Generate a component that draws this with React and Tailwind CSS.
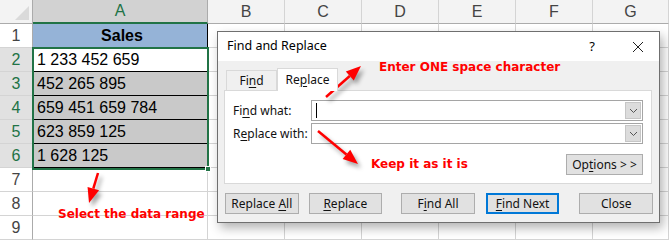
import React from 'react';

const cols = [
  { key: 'A', w: 'w-[175px]' },
  { key: 'B', w: 'w-[77px]' },
  { key: 'C', w: 'w-[77px]' },
  { key: 'D', w: 'w-[77px]' },
  { key: 'E', w: 'w-[77px]' },
  { key: 'F', w: 'w-[77px]' },
  { key: 'G', w: 'w-[76px]' },
];

const values = ['Sales', '1 233 452 659', '452 265 895', '659 451 659 784', '623 859 125', '1 628 125', '', '', ''];

const cellFont = { fontFamily: '"Liberation Sans", Arial, sans-serif' };
const uiFont = { fontFamily: '"Noto Sans", "Liberation Sans", sans-serif' };
const noteFont = { fontFamily: '"DejaVu Sans", Verdana, sans-serif' };

function U({ children }) {
  return <span className="underline underline-offset-2">{children}</span>;
}

function Btn({ children, className = '', focused = false }) {
  const border = focused ? 'border-2 border-[#0078d7]' : 'border border-[#adadad]';
  return (
    <div className={`h-[21px] w-[74px] flex items-center justify-center bg-[#e1e1e1] text-[12px] text-[#111] ${border} ${className}`}>
      <span>{children}</span>
    </div>
  );
}

function ComboInput({ cursor }) {
  return (
    <div className="h-[21px] w-[332px] flex items-stretch bg-white border border-[#a5a5a5]">
      <div className="flex-1 flex items-center pl-[4px]">
        {cursor && <div className="w-[1px] h-[15px] bg-black" />}
      </div>
      <div className="w-[16px] m-[1px] bg-[#dcdcdc] border border-[#c6c6c6] flex items-center justify-center">
        <svg width="9" height="6" viewBox="0 0 9 6"><path d="M1 1 L4.5 4.5 L8 1" stroke="#555" strokeWidth="1" fill="none" /></svg>
      </div>
    </div>
  );
}

function Sheet() {
  return (
    <div className="flex flex-col" style={cellFont}>
      {/* column headers */}
      <div className="flex h-[24px]">
        <div className="w-[33px] bg-[#f3f3f3] border-r border-b border-[#ababab] relative">
          <div className="absolute right-[3px] bottom-[3px] w-0 h-0 border-l-[14px] border-l-transparent border-b-[14px] border-b-[#dadada]" />
        </div>
        {cols.map((c) =>
          c.key === 'A' ? (
            <div key={c.key} className={`${c.w} bg-[#d2d2d2] border-r border-[#ababab] border-b-2 border-b-[#217346] flex items-center justify-center text-[16px] text-[#217346]`}>
              {c.key}
            </div>
          ) : (
            <div key={c.key} className={`${c.w} bg-[#f3f3f3] border-r border-b border-[#d4d4d4] border-b-[#ababab] flex items-center justify-center text-[16px] text-[#444]`}>
              {c.key}
            </div>
          )
        )}
      </div>
      {values.map((v, i) => {
        const row = i + 1;
        const sel = row >= 2 && row <= 6;
        let aCls = 'bg-white border-b border-[#d4d4d4]';
        if (row === 1) aCls = 'bg-[#95b3d7] border-b border-black font-bold justify-center';
        else if (row === 2) aCls = 'bg-white border-b border-black';
        else if (sel) aCls = 'bg-[#c9c9c9] border-b border-black';
        return (
          <div key={row} className="flex h-[24px]">
            <div className={`w-[33px] border-r border-b border-[#d4d4d4] border-r-[#ababab] flex items-center justify-center text-[16px] ${sel ? 'bg-[#e1e1e1] text-[#217346]' : 'bg-white text-[#444]'}`}>
              {row}
            </div>
            <div className={`w-[175px] border-r border-[#d4d4d4] flex items-center pl-[4px] text-[16px] text-black ${aCls}`}>
              {v}
            </div>
            {cols.slice(1).map((c) => (
              <div key={c.key} className={`${c.w} bg-white border-r border-b border-[#d4d4d4]`} />
            ))}
          </div>
        );
      })}
    </div>
  );
}

function Dialog() {
  return (
    <div className="absolute left-[217px] top-[31px] w-[443px] h-[192px] flex flex-col bg-[#f0f0f0] border border-[#6f6f6f] shadow-[3px_5px_10px_rgba(0,0,0,0.3)]" style={uiFont}>
      <div className="h-[29px] bg-white flex items-center pl-[9px] pr-[15px] text-[12.5px] text-black">
        <span className="flex-1">Find and Replace</span>
        <span className="mr-[37px] text-[13px]">?</span>
        <svg width="12" height="12" viewBox="0 0 12 12"><path d="M1 1 L11 11 M11 1 L1 11" stroke="#222" strokeWidth="1" /></svg>
      </div>
      <div className="flex flex-col px-[6px]">
        <div className="flex items-end h-[29px] pl-[2px] text-[12px] text-[#111]">
          <div className="w-[51px] h-[20px] flex items-center justify-center border border-b-0 border-[#d9d9d9] bg-[#f0f0f0]">
            <span>Fi<U>n</U>d</span>
          </div>
          <div className="w-[61px] h-[23px] -mb-[1px] flex items-center justify-center border border-b-0 border-[#d9d9d9] bg-white relative z-10">
            <span>Re<U>p</U>lace</span>
          </div>
        </div>
        <div className="w-[428px] h-[94px] bg-white border border-[#d9d9d9] flex flex-col pl-[8px] pt-[9px] text-[12px] text-[#111]">
          <div className="flex items-center h-[21px]">
            <span className="w-[78px]">Fi<U>n</U>d what:</span>
            <ComboInput cursor />
          </div>
          <div className="flex items-center h-[21px] mt-[2px]">
            <span className="w-[78px]">R<U>e</U>place with:</span>
            <ComboInput />
          </div>
          <div className="flex justify-end pr-[8px] mt-[10px]">
            <Btn className="w-[77px]">Op<U>t</U>ions &gt; &gt;</Btn>
          </div>
        </div>
        <div className="flex mt-[9px] pl-[1px]">
          <Btn>Replace <U>A</U>ll</Btn>
          <Btn className="ml-[10px]"><U>R</U>eplace</Btn>
          <Btn className="ml-[19px] w-[73px]">F<U>i</U>nd All</Btn>
          <Btn className="ml-[11px] w-[73px]" focused><U>F</U>ind Next</Btn>
          <Btn className="ml-[20px] w-[73px]">Close</Btn>
        </div>
      </div>
    </div>
  );
}

function Arrow({ x1, y1, x2, y2 }) {
  const ang = Math.atan2(y2 - y1, x2 - x1);
  const len = 15;
  const half = 6;
  const bx = x2 - len * Math.cos(ang);
  const by = y2 - len * Math.sin(ang);
  const px = -Math.sin(ang) * half;
  const py = Math.cos(ang) * half;
  return (
    <g>
      <line x1={x1} y1={y1} x2={bx} y2={by} stroke="#ff0000" strokeWidth="2.5" />
      <polygon points={`${x2},${y2} ${bx + px},${by + py} ${bx - px},${by - py}`} fill="#ff0000" />
    </g>
  );
}

export default function App() {
  return (
    <div className="relative w-[669px] h-[241px] overflow-hidden bg-white">
      <Sheet />
      {/* selection outline A2:A6 */}
      <div className="absolute left-[32px] top-[47px] w-[177px] h-[123px] border-2 border-[#217346]" />
      <div className="absolute left-[205px] top-[166px] w-[6px] h-[6px] bg-[#217346] border border-white" />
      <Dialog />
      {/* annotations */}
      <div className="absolute left-[379px] top-[58px] text-[12px] font-bold text-[#ff0000]" style={noteFont}>Enter ONE space character</div>
      <div className="absolute left-[371px] top-[155px] text-[12px] font-bold text-[#ff0000]" style={noteFont}>Keep it as it is</div>
      <div className="absolute left-[58px] top-[205px] text-[12px] font-bold text-[#ff0000]" style={noteFont}>Select the data range</div>
      <svg className="absolute left-0 top-0 pointer-events-none" width="669" height="241" style={{ filter: 'drop-shadow(3px 4px 2px rgba(0,0,0,0.35))' }}>
        <Arrow x1={326} y1={97} x2={361} y2={66} />
        <Arrow x1={318} y1={131} x2={358} y2={164} />
        <Arrow x1={98} y1={173} x2={89} y2={203} />
      </svg>
    </div>
  );
}
